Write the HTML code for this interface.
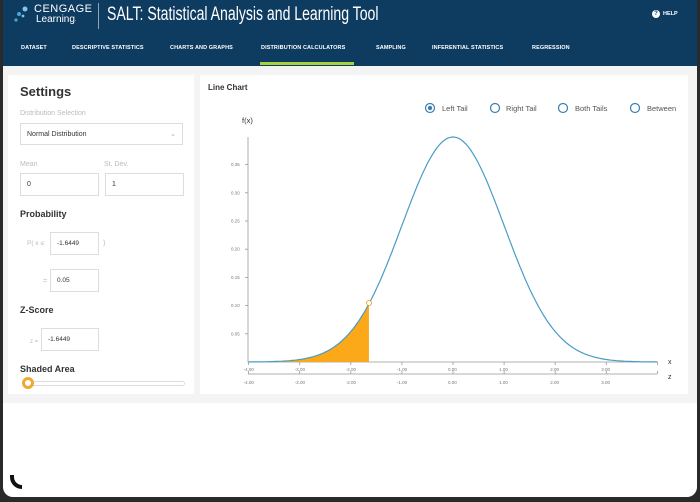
<!DOCTYPE html>
<html><head><style>
*{margin:0;padding:0;box-sizing:border-box}
body{width:700px;height:502px;background:#2a2a2a;font-family:"Liberation Sans",sans-serif;position:relative;overflow:hidden}
.scr{position:absolute;left:3px;top:0;width:694px;height:497px;background:#fff;border-radius:0 0 10px 10px;overflow:hidden}
.hdr{position:absolute;left:0;top:0;width:694px;height:66px;background:#0e3b60}
.t{position:absolute;white-space:nowrap}
.nav{position:absolute;top:45px;color:#fff;font-size:5.5px;font-weight:bold;letter-spacing:0.1px}
.main{position:absolute;left:0;top:66px;width:694px;height:337px;background:#f4f4f4}
.panel{position:absolute;background:#fff}
.inp{position:absolute;border:1px solid #ddd;background:#fff;font-size:7px;color:#333;padding-left:6px;display:flex;align-items:center}
.lbl{position:absolute;font-size:7px;color:#bbb}
.h{position:absolute;font-size:9px;font-weight:bold;color:#333}
</style></head><body>
<div class="scr">
<div class="hdr">
 <svg class="t" style="left:8px;top:4px" width="24" height="22"><circle cx="14" cy="5" r="2.5" fill="#7fc6e8"/><circle cx="8" cy="10" r="2" fill="#4aa6d6"/><circle cx="5" cy="16" r="1.6" fill="#4aa6d6"/><circle cx="12" cy="12" r="1.4" fill="#7fc6e8"/></svg>
 <div class="t" style="left:31px;top:3px;color:#fff;font-size:11px;letter-spacing:0.5px">CENGAGE</div>
 <div class="t" style="left:33px;top:14px;color:#fff;font-size:10px">Learning<span style="font-size:5px">·</span></div>
 <div class="t" style="left:95px;top:3px;width:1px;height:26px;background:#8aa"></div>
 <div class="t" style="left:104px;top:4px;color:#fff;font-size:19px;transform:scaleX(0.74);transform-origin:left">SALT: Statistical Analysis and Learning Tool</div>
 <div class="t" style="left:649px;top:10px;width:8px;height:8px;border-radius:50%;background:#fff;color:#0e3b60;font-size:6px;font-weight:bold;text-align:center;line-height:8px">?</div>
 <div class="t" style="left:660px;top:11px;color:#fff;font-size:5.5px;font-weight:bold">HELP</div>
 <div class="nav" style="left:18px">DATASET</div>
 <div class="nav" style="left:69px">DESCRIPTIVE STATISTICS</div>
 <div class="nav" style="left:167px">CHARTS AND GRAPHS</div>
 <div class="nav" style="left:258px">DISTRIBUTION CALCULATORS</div>
 <div class="nav" style="left:373px">SAMPLING</div>
 <div class="nav" style="left:429px">INFERENTIAL STATISTICS</div>
 <div class="nav" style="left:529px">REGRESSION</div>
 <div class="t" style="left:257px;top:62px;width:94px;height:3px;background:#a6d23c"></div>
</div>
<div class="main">
 <div class="panel" style="left:5px;top:9px;width:186px;height:319px">
  <div class="h" style="left:12px;top:9px;font-size:13px">Settings</div>
  <div class="lbl" style="left:12px;top:35px">Distribution Selection</div>
  <div class="inp" style="left:12px;top:48px;width:163px;height:22px">Normal Distribution<span style="position:absolute;right:6px;color:#aaa;font-size:7px">⌄</span></div>
  <div class="lbl" style="left:12px;top:86px">Mean</div>
  <div class="lbl" style="left:96px;top:86px">St. Dev.</div>
  <div class="inp" style="left:12px;top:98px;width:79px;height:23px">0</div>
  <div class="inp" style="left:97px;top:98px;width:79px;height:23px">1</div>
  <div class="h" style="left:12px;top:134px">Probability</div>
  <div class="lbl" style="left:19px;top:165px;font-size:6.5px">P( x ≤</div>
  <div class="inp" style="left:42px;top:157px;width:49px;height:23px;font-size:6.5px">-1.6449</div>
  <div class="lbl" style="left:95px;top:165px">)</div>
  <div class="lbl" style="left:35px;top:203px">=</div>
  <div class="inp" style="left:42px;top:194px;width:49px;height:23px;font-size:6.5px">0.05</div>
  <div class="h" style="left:12px;top:230px">Z-Score</div>
  <div class="lbl" style="left:22px;top:264px;font-size:6px">z =</div>
  <div class="inp" style="left:33px;top:253px;width:58px;height:23px;font-size:6.5px">-1.6449</div>
  <div class="h" style="left:12px;top:289px">Shaded Area</div>
  <div class="t" style="left:17px;top:306px;width:160px;height:5px;border:1px solid #ddd;border-radius:3px"></div>
  <div class="t" style="left:14px;top:302px;width:12px;height:12px;border:3px solid #f0a830;border-radius:50%;background:#fff"></div>
 </div>
 <div class="panel" style="left:197px;top:9px;width:488px;height:319px">
  <div class="h" style="left:8px;top:8px;font-size:8px">Line Chart</div>
 </div>
</div>
<svg class="t" style="left:-3px;top:0" width="700" height="502" font-family="Liberation Sans, sans-serif">
 <g font-size="7.5" fill="#555">
  <circle cx="430" cy="108" r="4.5" fill="none" stroke="#3a7fb0" stroke-width="1.2"/><circle cx="430" cy="108" r="2.2" fill="#3a7fb0"/>
  <text x="442" y="111">Left Tail</text>
  <circle cx="495" cy="108" r="4.5" fill="none" stroke="#3a7fb0" stroke-width="1.2"/><text x="506" y="111">Right Tail</text>
  <circle cx="563" cy="108" r="4.5" fill="none" stroke="#3a7fb0" stroke-width="1.2"/><text x="575" y="111">Both Tails</text>
  <circle cx="635" cy="108" r="4.5" fill="none" stroke="#3a7fb0" stroke-width="1.2"/><text x="647" y="111">Between</text>
  <text x="242" y="123" font-size="7.5" fill="#333">f(x)</text>
  <text x="668" y="364" font-size="7" fill="#333">x</text>
  <text x="668" y="379" font-size="7" fill="#333">z</text>
 </g>
 <g id="ax" stroke="#999" stroke-width="0.8" fill="none"></g>
 <g id="lb" font-size="4.5" fill="#777"></g>
 <path id="fill" fill="#fba919"/>
 <path id="curve" fill="none" stroke="#4a9cc6" stroke-width="1.2"/>
 <circle cx="369" cy="303" r="2.5" fill="#fff" stroke="#f0a830" stroke-width="1"/>
</svg>
<div class="t" style="left:7px;top:475px;width:12px;height:14px;border-left:4px solid #111;border-bottom:4px solid #111;border-radius:0 0 0 12px"></div>
</div>
<script>
var X0=453,S=51.1,B=362,K=564;
function px(x){return X0+x*S} function py(x){return B-Math.exp(-x*x/2)/Math.sqrt(2*Math.PI)*K}
var d="",f="M"+px(-4)+" "+B;
for(var x=-4;x<=4.001;x+=0.05){d+=(d?"L":"M")+px(x).toFixed(1)+" "+py(x).toFixed(1);}
for(var x=-4;x<=-1.6449;x+=0.05){f+="L"+px(x).toFixed(1)+" "+py(x).toFixed(1);}
f+="L"+px(-1.6449)+" "+py(-1.6449)+"L"+px(-1.6449)+" "+B+"Z";
document.getElementById("curve").setAttribute("d",d);
document.getElementById("fill").setAttribute("d",f);
var ax="",lb="";
ax+='<path d="M248 137V362H657M248 374H657"/>';
for(var i=-4;i<=4;i++){var xx=px(i);ax+='<path d="M'+xx+' 362v3M'+xx+' 374v-3"/>';
 if(i<4){lb+='<text x="'+(xx-5)+'" y="371">'+i.toFixed(2)+'</text><text x="'+(xx-5)+'" y="384">'+i.toFixed(2)+'</text>';}}
for(var j=1;j<=7;j++){var yy=B-j*0.05*K;ax+='<path d="M245 '+yy+'h3"/>';lb+='<text x="231" y="'+(yy+1.5)+'">'+(j*0.05).toFixed(2)+'</text>';}
document.getElementById("ax").innerHTML=ax;document.getElementById("lb").innerHTML=lb;
</script>
</body></html>
